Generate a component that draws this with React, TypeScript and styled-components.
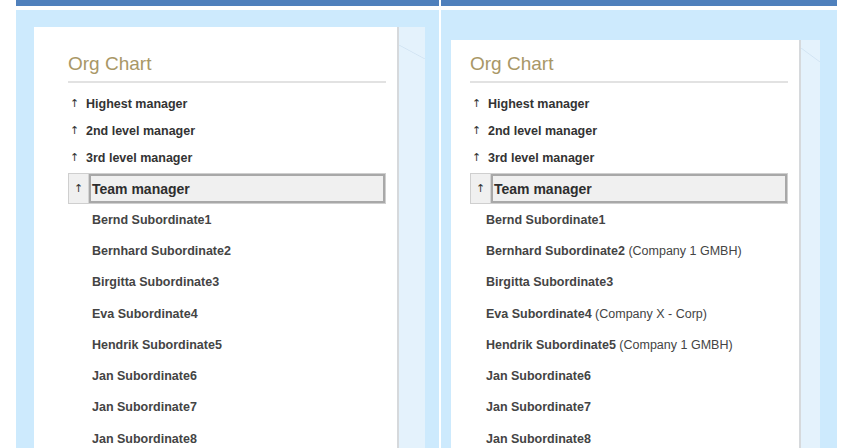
import styled, {createGlobalStyle} from "styled-components";

const GlobalStyle = createGlobalStyle`
    html, body {
        margin: 0;
        padding: 0;
        background: #ffffff;
        overflow: hidden;
        font-family: "Liberation Sans", Arial, sans-serif;
    }
`;

type Person = {
    name: string;
    company?: string;
}

type PanelProps = {
    width: number;
    padLeft: number;
    padTop: number;
    cardWidth: number;
    cardPadTop: number;
    cardPadLeft: number;
    stripWidth: number;
    subIndent: number;
    lineOffset: number;
    showCompany: boolean;
}

const managers = ['Highest manager', '2nd level manager', '3rd level manager'];

const subordinates: Person[] = [
    {name: 'Bernd Subordinate1'},
    {name: 'Bernhard Subordinate2', company: 'Company 1 GMBH'},
    {name: 'Birgitta Subordinate3'},
    {name: 'Eva Subordinate4', company: 'Company X - Corp'},
    {name: 'Hendrik Subordinate5', company: 'Company 1 GMBH'},
    {name: 'Jan Subordinate6'},
    {name: 'Jan Subordinate7'},
    {name: 'Jan Subordinate8'},
];

const OrgPanel = (p: PanelProps) => (
    <Column $width={p.width}>
        <TopBar/>
        <Backdrop $padLeft={p.padLeft} $padTop={p.padTop}>
            <Card $width={p.cardWidth} $padTop={p.cardPadTop} $padLeft={p.cardPadLeft}>
                <Heading>Org Chart</Heading>
                <ManagerList>
                    {managers.map(m => (
                        <ManagerRow key={m}>
                            <Arrow>↑</Arrow>
                            {m}
                        </ManagerRow>
                    ))}
                </ManagerList>
                <CurrentBox>
                    <ArrowCell>↑</ArrowCell>
                    <CurrentName>Team manager</CurrentName>
                </CurrentBox>
                <SubList $indent={p.subIndent}>
                    {subordinates.map(s => (
                        <SubRow key={s.name}>
                            <b>{s.name}</b>
                            {p.showCompany && s.company ? <Company> ({s.company})</Company> : null}
                        </SubRow>
                    ))}
                </SubList>
            </Card>
            <Strip $width={p.stripWidth} $lineOffset={p.lineOffset}/>
        </Backdrop>
    </Column>
);

export default function App() {
    return (
        <>
            <GlobalStyle/>
            <Page>
                <OrgPanel width={423} padLeft={18} padTop={17} cardWidth={365} cardPadTop={25}
                          cardPadLeft={34} stripWidth={26} subIndent={24} lineOffset={18} showCompany={false}/>
                <OrgPanel width={396} padLeft={10} padTop={30} cardWidth={350} cardPadTop={12}
                          cardPadLeft={19} stripWidth={19} subIndent={16} lineOffset={8} showCompany={true}/>
            </Page>
        </>
    );
}

const Page = styled.div`
    display: flex;
    gap: 2px;
    padding-left: 16px;
    height: 448px;
    overflow: hidden;
`;

const Column = styled.div<{ $width: number }>`
    width: ${p => p.$width}px;
    display: flex;
    flex-direction: column;
`;

const TopBar = styled.div`
    flex-shrink: 0;
    height: 6px;
    background: #4f80bc;
`;

const Backdrop = styled.div<{ $padLeft: number; $padTop: number }>`
    margin-top: 4px;
    flex: 1;
    min-height: 0;
    overflow: hidden;
    display: flex;
    align-items: flex-start;
    background: #cdeafd;
    padding: ${p => p.$padTop}px 0 0 ${p => p.$padLeft}px;
`;

const Card = styled.div<{ $width: number; $padTop: number; $padLeft: number }>`
    box-sizing: border-box;
    flex-shrink: 0;
    width: ${p => p.$width}px;
    min-height: 600px;
    background: #ffffff;
    border-right: 2px solid #d6d9dc;
    padding: ${p => p.$padTop}px 11px 0 ${p => p.$padLeft}px;
    color: #3a3a3a;
`;

const Strip = styled.div<{ $width: number; $lineOffset: number }>`
    flex-shrink: 0;
    width: ${p => p.$width}px;
    height: 600px;
    background: linear-gradient(to top right, transparent calc(50% - 0.8px), #d2e4f3 50%, transparent calc(50% + 0.8px)) no-repeat 0 ${p => p.$lineOffset}px / 100% 14px,
                #e4f2fc;
`;

const Heading = styled.h2`
    margin: 0;
    font-size: 19px;
    font-weight: normal;
    line-height: 24px;
    color: #a99766;
    padding-bottom: 5px;
    border-bottom: 2px solid #e2e2e2;
`;

const ManagerList = styled.div`
    margin-top: 7px;
    display: flex;
    flex-direction: column;
`;

const ManagerRow = styled.div`
    display: flex;
    align-items: center;
    height: 27px;
    font-size: 12.5px;
    font-weight: bold;
    color: #333333;
`;

const Arrow = styled.span`
    width: 16px;
    padding-left: 2px;
    font-family: "DejaVu Sans", sans-serif;
    font-size: 11px;
    font-weight: normal;
    color: #333333;
`;

const CurrentBox = styled.div`
    margin-top: 2px;
    display: flex;
    height: 31px;
    box-sizing: border-box;
    border: 1px solid #cfcfcf;
`;

const ArrowCell = styled.div`
    width: 19px;
    display: flex;
    align-items: center;
    justify-content: center;
    background: #f0f0f0;
    border-right: 1px solid #d4d4d4;
    font-family: "DejaVu Sans", sans-serif;
    font-size: 11px;
    color: #333333;
`;

const CurrentName = styled.div`
    flex: 1;
    display: flex;
    align-items: center;
    padding-left: 1px;
    background: #f0f0f0;
    border: 2px solid #a8a8a8;
    font-size: 14px;
    font-weight: bold;
    color: #2e2e2e;
`;

const SubList = styled.div<{ $indent: number }>`
    display: flex;
    flex-direction: column;
    padding-left: ${p => p.$indent}px;
`;

const SubRow = styled.div`
    height: 31.3px;
    display: flex;
    align-items: center;
    white-space: pre;
    font-size: 12.5px;
    color: #444444;
`;

const Company = styled.span`
    font-weight: normal;
    color: #444444;
`;
